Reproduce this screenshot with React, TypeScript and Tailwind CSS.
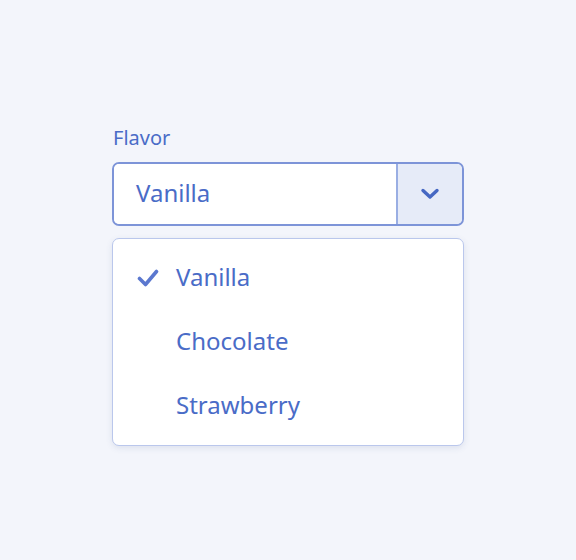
import { useState } from "react";

const flavors = ["Vanilla", "Chocolate", "Strawberry"];

function Check() {
  return (
    <svg width="22" height="18" viewBox="0 0 22 18" fill="none">
      <path d="M2.5 9.5 L8.5 15.5 L19.5 2.5" stroke="#5b78cf" strokeWidth="3.6" strokeLinecap="round" strokeLinejoin="round" />
    </svg>
  );
}

function Chevron() {
  return (
    <svg width="20" height="12" viewBox="0 0 20 12" fill="none">
      <path d="M3 2.5 L10 9 L17 2.5" stroke="#4668c3" strokeWidth="3.4" strokeLinecap="round" strokeLinejoin="round" />
    </svg>
  );
}

export default function App() {
  const [selected] = useState("Vanilla");
  return (
    <div className="w-[576px] h-[560px] bg-[#f3f5fb] pt-[124px] pl-[112px]" style={{ fontFamily: '"Noto Sans", "Open Sans", sans-serif' }}>
      <div className="w-[352px] flex flex-col">
        <label className="text-[20px] leading-[28px] text-[#4a6cc7] pl-[1px]">Flavor</label>
        <div className="mt-[10px] h-[64px] flex rounded-[7px] border-2 border-[#7d94d8] overflow-hidden">
          <div className="flex-1 bg-white flex items-center pl-[22px] pb-[2px] text-[24px] text-[#4a6cc7]">{selected}</div>
          <div className="w-[66px] bg-[#e6ebf8] border-l-2 border-[#9aaee3] flex items-center justify-center">
            <Chevron />
          </div>
        </div>
        <ul className="mt-[12px] w-[352px] bg-white rounded-[7px] border border-[#bac7ec] py-[7px] shadow-[0_2px_6px_rgba(60,80,140,0.12)]">
          {flavors.map((f) => (
            <li key={f} className="h-[64px] flex items-center text-[24px] text-[#4a6cc7]">
              <span className="w-[63px] flex justify-end pr-[17px]">{f === selected ? <Check /> : null}</span>
              <span className="pb-[2px]">{f}</span>
            </li>
          ))}
        </ul>
      </div>
    </div>
  );
}
